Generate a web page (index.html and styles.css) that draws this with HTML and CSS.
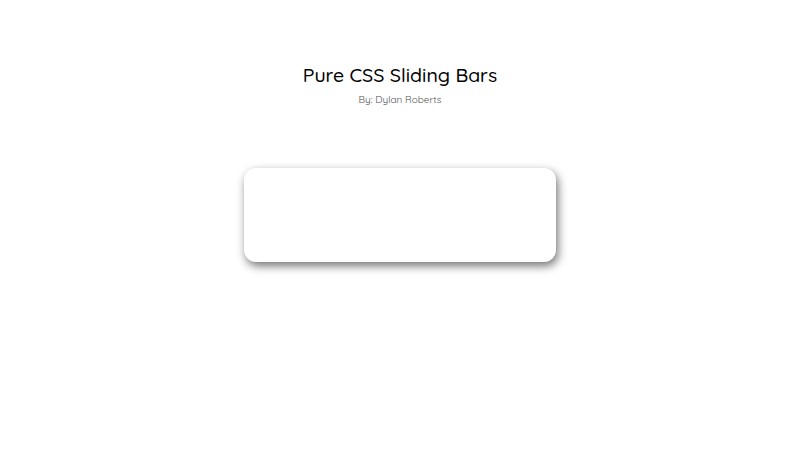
FILE: index.html
```html
<!DOCTYPE html>
<html>

<head>
    <link rel="stylesheet" href="styles.css">
</head>

<body>
    <header class="heading">
        <h1 class="title">Pure CSS Sliding Bars</h1>
        <p class="byline">By: Dylan Roberts</p>
    </header>
    <section class="bars">
        <div class="card"></div>
    </section>
</body>

</html>
```

FILE: styles.css
```css
body {
    margin: 0;
    min-height: 100vh;
    background: #fff;
    font-family: "Quicksand", "Lato", sans-serif;
    color: #000;
}

.heading {
    text-align: center;
    padding-top: 61px;
}

.title {
    margin: 0;
    font-size: 19.5px;
    font-weight: 500;
    line-height: 28px;
}

.byline {
    margin: 5px 0 0 0;
    font-size: 10px;
    line-height: 12px;
    color: #555;
}

.bars {
    display: flex;
    justify-content: center;
    padding: 62px 0 40px 0;
}

.card {
    width: 312px;
    height: 94px;
    background: #fff;
    border-radius: 12px;
    box-shadow: 2px 4px 10px rgba(0, 0, 0, 0.55);
}
```
